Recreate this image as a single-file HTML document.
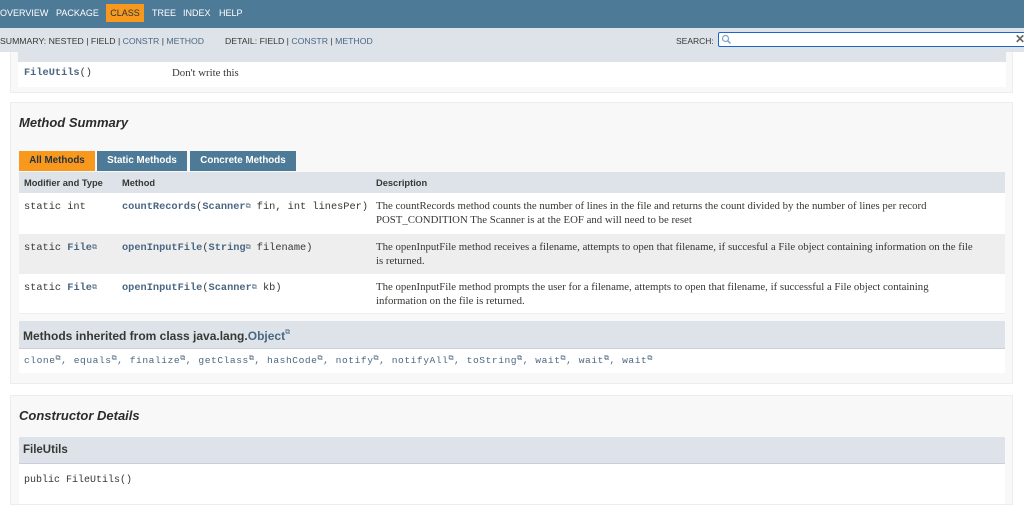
<!DOCTYPE html>
<html><head><meta charset="utf-8">
<style>
*{margin:0;padding:0;box-sizing:border-box}
body{width:1024px;height:497px;overflow:hidden;background:#fff;font-family:"Liberation Sans",Arial,sans-serif;position:relative;color:#353833}
.a{position:absolute}
.mono{font-family:"Liberation Mono","DejaVu Sans Mono",monospace;font-size:10.3px}
.serif{font-family:"Liberation Serif","DejaVu Serif",serif;font-size:10.8px}
.lnk{color:#4A6782}
.b{font-weight:bold}
.ext{font-size:7px;vertical-align:top;color:#4A6782;font-weight:normal}
.box{position:absolute;left:10px;width:1003px;background:#f8f8f8;border:1px solid #ededed}
.hdr{background:#dee3e9}
.row{position:absolute;left:19px;width:986px}
.cell{position:absolute;top:7px;line-height:14px}
</style></head><body>
<div class="box" style="top:40px;height:53px"></div>
<div class="a hdr" style="left:18px;top:52px;width:988px;height:10px"></div>
<div class="a" style="left:18px;top:62px;width:988px;height:25px;background:#fff"></div>
<div class="a mono b lnk" style="left:24px;top:67px">FileUtils<span style="font-weight:normal;color:#353833">()</span></div>
<div class="a serif" style="left:172px;top:67px">Don't write this</div>

<div class="a" style="left:0;top:0;width:1024px;height:28px;background:#4D7A97"></div>
<div class="a" style="left:0;top:0;height:28px;font-size:9px;color:#fff;line-height:26px;white-space:nowrap">
<span class="a" style="left:0">OVERVIEW</span>
<span class="a" style="left:56px">PACKAGE</span>
<span class="a" style="left:106px;top:4px;height:18px;width:38px;background:#F8981D;line-height:18px;text-align:center;color:#253441">CLASS</span>
<span class="a" style="left:152px">TREE</span>
<span class="a" style="left:183px">INDEX</span>
<span class="a" style="left:219px">HELP</span>
</div>
<div class="a" style="left:0;top:28px;width:1024px;height:24px;background:#dee3e9"></div>
<div class="a" style="left:0;top:36px;font-size:8.7px;white-space:nowrap;color:#353833">SUMMARY: NESTED | FIELD | <span class="lnk">CONSTR</span> | <span class="lnk">METHOD</span></div>
<div class="a" style="left:225px;top:36px;font-size:8.7px;white-space:nowrap;color:#353833">DETAIL: FIELD | <span class="lnk">CONSTR</span> | <span class="lnk">METHOD</span></div>
<div class="a" style="left:676px;top:36px;font-size:8.5px;color:#353833">SEARCH:</div>
<div class="a" style="left:718px;top:32px;width:310px;height:15px;background:#fff;border:1.5px solid #1a66cc;border-radius:2px"></div>
<svg class="a" style="left:721px;top:34px" width="11" height="11" viewBox="0 0 11 11"><circle cx="4.5" cy="4.5" r="3" fill="none" stroke="#7aa3cc" stroke-width="1.2"/><line x1="6.7" y1="6.7" x2="9.5" y2="9.5" stroke="#7aa3cc" stroke-width="1.5"/></svg>
<div class="a b" style="left:1015px;top:32px;font-size:12px;color:#666">✕</div>

<div class="box" style="top:102px;height:282px"></div>
<div class="a b" style="left:19px;top:115px;font-size:13px;font-style:italic;color:#2c2c2c">Method Summary</div>
<div class="a b" style="left:19px;top:151px;width:76px;height:20px;background:#F8981D;font-size:9.8px;line-height:19px;text-align:center;color:#253441">All Methods</div>
<div class="a b" style="left:97px;top:151px;width:90px;height:20px;background:#4D7A97;font-size:9.8px;line-height:19px;text-align:center;color:#fff">Static Methods</div>
<div class="a b" style="left:190px;top:151px;width:106px;height:20px;background:#4D7A97;font-size:9.8px;line-height:19px;text-align:center;color:#fff">Concrete Methods</div>

<div class="row hdr" style="top:172px;height:21px;font-size:9.3px;font-weight:bold">
<span class="a" style="left:5px;top:6px">Modifier and Type</span>
<span class="a" style="left:103px;top:6px">Method</span>
<span class="a" style="left:357px;top:6px">Description</span>
</div>
<div class="row" style="top:193px;height:41px;background:#fff">
<div class="cell mono" style="left:5px">static int</div>
<div class="cell mono" style="left:103px;white-space:nowrap"><span class="b lnk">countRecords</span>(<span class="b lnk">Scanner</span><span class="ext">⧉</span> fin, int linesPer)</div>
<div class="cell serif" style="left:357px;width:590px;top:6px;line-height:14px">The countRecords method counts the number of lines in the file and returns the count divided by the number of lines per record POST_CONDITION The Scanner is at the EOF and will need to be reset</div>
</div>
<div class="row" style="top:234px;height:40px;background:#eeeeef">
<div class="cell mono" style="left:5px">static <span class="b lnk">File</span><span class="ext">⧉</span></div>
<div class="cell mono" style="left:103px;white-space:nowrap"><span class="b lnk">openInputFile</span>(<span class="b lnk">String</span><span class="ext">⧉</span> filename)</div>
<div class="cell serif" style="left:357px;width:604px;top:6px;line-height:14px">The openInputFile method receives a filename, attempts to open that filename, if succesful a File object containing information on the file is returned.</div>
</div>
<div class="row" style="top:274px;height:40px;background:#fff;border-bottom:1px solid #eee">
<div class="cell mono" style="left:5px">static <span class="b lnk">File</span><span class="ext">⧉</span></div>
<div class="cell mono" style="left:103px;white-space:nowrap"><span class="b lnk">openInputFile</span>(<span class="b lnk">Scanner</span><span class="ext">⧉</span> kb)</div>
<div class="cell serif" style="left:357px;width:590px;top:6px;line-height:14px">The openInputFile method prompts the user for a filename, attempts to open that filename, if successful a File object containing information on the file is returned.</div>
</div>

<div class="row hdr" style="top:321px;height:28px;border-bottom:1px solid #ccd">
<span class="a b" style="left:4px;top:8px;font-size:12px;color:#353833">Methods inherited from class java.lang.<span class="lnk">Object</span><span class="ext">⧉</span></span>
</div>
<div class="row" style="top:349px;height:24px;background:#fff">
<span class="a mono lnk" style="left:5px;top:6px;font-size:9.6px;white-space:nowrap;letter-spacing:0.55px">clone<span class="ext">⧉</span>, equals<span class="ext">⧉</span>, finalize<span class="ext">⧉</span>, getClass<span class="ext">⧉</span>, hashCode<span class="ext">⧉</span>, notify<span class="ext">⧉</span>, notifyAll<span class="ext">⧉</span>, toString<span class="ext">⧉</span>, wait<span class="ext">⧉</span>, wait<span class="ext">⧉</span>, wait<span class="ext">⧉</span></span>
</div>

<div class="box" style="top:395px;height:110px"></div>
<div class="a b" style="left:19px;top:408px;font-size:13px;font-style:italic;color:#2c2c2c">Constructor Details</div>
<div class="row hdr" style="top:437px;height:27px;border-bottom:1px solid #ccd">
<span class="a b" style="left:4px;top:7px;font-size:11.5px">FileUtils</span>
</div>
<div class="row" style="top:464px;height:40px;background:#fff">
<span class="a mono" style="left:5px;top:11px;font-size:10px">public FileUtils()</span>
</div>
</body></html>
